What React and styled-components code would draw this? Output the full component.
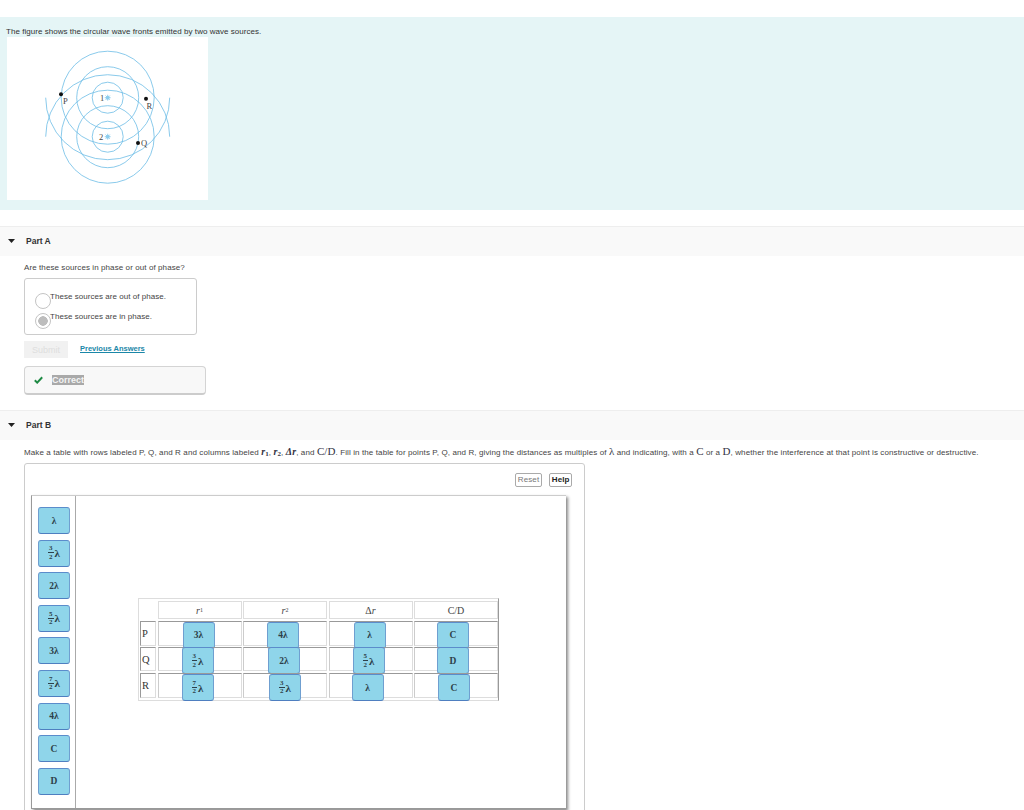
import React from 'react';
import styled, { createGlobalStyle } from 'styled-components';

const GlobalStyle = createGlobalStyle`
  html, body {
    margin: 0;
    height: 810px;
    overflow: hidden;
    background: #fff;
  }
  body {
    font-family: "Liberation Sans", Arial, sans-serif;
    font-size: 8px;
    color: #444;
  }
`;

const Intro = styled.section`
  margin-top: 17px;
  height: 193px;
  box-sizing: border-box;
  padding: 10px 0 0 6px;
  background: #e5f5f6;
`;

const IntroText = styled.div`
  height: 10px;
  line-height: 10px;
  color: #333;
  letter-spacing: 0.04px;
`;

const Figure = styled.div`
  width: 201px;
  height: 163px;
  margin-left: 1px;
  background: #fff;
`;

const PartHeader = styled.header`
  display: flex;
  align-items: center;
  height: 30px;
  box-sizing: border-box;
  margin-top: ${(p) => p.$top}px;
  border-top: 1px solid #eee;
  background: #f9f9f9;
  padding: 0 0 1px 8px;
  font-size: 8.5px;
  font-weight: 700;
  color: #333;
  gap: 11px;
`;

const PartBody = styled.div`
  padding-left: 24px;
`;

const Question = styled.p`
  margin: 7px 0 0;
  height: 10px;
  line-height: 10px;
  letter-spacing: 0.09px;
`;

const Choices = styled.div`
  box-sizing: border-box;
  width: 173px;
  height: 57px;
  margin-top: 5px;
  padding: 10px 0 0 10px;
  border: 1px solid #ccc;
  border-radius: 3px;
`;

const Choice = styled.div`
  display: flex;
  height: 20px;
  letter-spacing: 0.04px;
  line-height: 16px;
`;

const Radio = styled.span`
  flex: none;
  box-sizing: border-box;
  width: 16px;
  height: 16px;
  margin: 4px -1px 0 0;
  border: 1px solid #c4c4c4;
  border-radius: 50%;
  background: ${(p) =>
    p.$checked ? 'radial-gradient(circle, #bdbdbd 0 4.5px, #fff 5px)' : '#fff'};
`;

const Actions = styled.div`
  display: flex;
  align-items: center;
  gap: 12px;
  margin-top: 6px;
`;

const SubmitButton = styled.span`
  display: flex;
  align-items: center;
  justify-content: center;
  width: 44px;
  height: 17px;
  background: #f1f1f1;
  color: #dedede;
  font-size: 9px;
`;

const AnswersLink = styled.a`
  position: relative;
  top: -1px;
  color: #1b87a8;
  font-size: 7.5px;
  font-weight: 700;
  text-decoration: underline;
`;

const Feedback = styled.div`
  display: flex;
  align-items: center;
  gap: 9px;
  box-sizing: border-box;
  width: 182px;
  height: 29px;
  margin-top: 8px;
  padding-left: 9px;
  background: #f8f8f8;
  border: 1px solid #d4d4d4;
  border-bottom: 2px solid #ccc;
  border-radius: 4px;
`;

const CorrectLabel = styled.span`
  background: #a9a9a9;
  color: #f4f4f4;
  font-weight: 700;
  font-size: 9px;
  line-height: 10px;
`;

const Prompt = styled.p`
  margin: 6px 0 0;
  height: 11px;
  line-height: 11px;
  white-space: nowrap;
  letter-spacing: 0.11px;
`;

const MathVar = styled.span`
  font-family: "Liberation Serif", serif;
  font-style: ${(p) => (p.$upright ? 'normal' : 'italic')};
  font-weight: ${(p) => (p.$light ? 400 : 700)};
  font-size: ${(p) => (p.$light ? 11 : 10)}px;
  color: #334;
  sub {
    font-size: 7px;
    vertical-align: -1px;
    line-height: 0;
    font-style: normal;
  }
`;

const Card = styled.div`
  box-sizing: border-box;
  width: 561px;
  height: 360px;
  margin-top: 6px;
  padding: 9px 6px 0 6px;
  border: 1px solid #ccc;
  border-radius: 3px 3px 0 0;
`;

const Tools = styled.div`
  display: flex;
  justify-content: flex-end;
  gap: 7px;
  padding-right: 6px;
`;

const ToolButton = styled.span`
  box-sizing: border-box;
  height: 14px;
  padding: 0 ${(p) => (p.$strong ? 1.5 : 2)}px;
  line-height: 12px;
  border: 1px solid #aaa;
  border-radius: 2px;
  background: #fff;
  color: ${(p) => (p.$strong ? '#222' : '#777')};
  font-weight: ${(p) => (p.$strong ? 700 : 400)};
  letter-spacing: 0.1px;
`;

const Board = styled.div`
  display: flex;
  box-sizing: border-box;
  width: 535px;
  height: 314px;
  margin-top: 8px;
  border-top: 1px solid #ccc;
  border-left: 1px solid #999;
  border-bottom: 1px solid #999;
  box-shadow: 2px 2px 3px #888;
  background: #fff;
`;

const Tray = styled.div`
  flex: none;
  display: flex;
  flex-direction: column;
  gap: 5.6px;
  box-sizing: border-box;
  width: 44px;
  padding: 11px 0 0 6px;
  border-right: 1px solid #aaa;
`;

const Token = styled.span`
  display: flex;
  align-items: center;
  justify-content: center;
  gap: 1px;
  box-sizing: border-box;
  width: 32px;
  height: 27px;
  background: #8fd5ea;
  border: 1px solid #6f9fd0;
  border-top-color: #5b8ccb;
  border-bottom-color: #4f7fc0;
  border-radius: 3px;
  font-family: "Liberation Serif", serif;
  font-weight: 700;
  font-size: 9.5px;
  color: #2d3f49;
`;

const PlacedToken = styled(Token)`
  position: absolute;
  top: ${(p) => p.$top}px;
  left: ${(p) => p.$left}px;
`;

const Fraction = styled.span`
  display: inline-flex;
  flex-direction: column;
  align-items: center;
  font-size: 7px;
  line-height: 7px;
`;

const Numerator = styled.span`
  padding: 0 1px;
  border-bottom: 1px solid #2d3f49;
`;

const Denominator = styled.span`
  padding-top: 0.5px;
`;

const Lambda = styled.span`
  font-size: 11px;
`;

const Workspace = styled.div`
  flex: 1;
  padding: 102px 0 0 62px;
`;

const Table = styled.div`
  position: relative;
  display: grid;
  grid-template-columns: 16px repeat(4, 84px);
  grid-template-rows: 18px 25px 24px 25px;
  gap: 1.7px 1.5px;
  box-sizing: border-box;
  width: 361px;
  height: 103px;
  padding: 2px 0 0 1px;
  border-top: 1px solid #ddd;
  border-left: 1px solid #ddd;
  border-right: 1px solid #999;
  border-bottom: 1px solid #ddd;
`;

const HeadCell = styled.div`
  display: flex;
  align-items: center;
  justify-content: center;
  border: 1px solid #ddd;
  font-family: "Liberation Serif", serif;
  font-size: 10px;
  color: #444;
  font-style: ${(p) => (p.$italic ? 'italic' : 'normal')};
  sub {
    font-size: 6px;
    line-height: 0;
    font-style: normal;
  }
`;

const BlankHead = styled.div``;

const RowLabel = styled.div`
  display: flex;
  align-items: center;
  padding-left: 1px;
  border: 1px solid;
  border-color: #999 #ddd #ddd #999;
  font-family: "Liberation Serif", serif;
  font-size: 10.5px;
  color: #333;
`;

const DropCell = styled.div`
  position: relative;
  border: 1px solid;
  border-color: #999 #ddd #ddd #ccc;
`;

const FracValue = ({ n }) => (
  <>
    <Fraction>
      <Numerator>{n}</Numerator>
      <Denominator>2</Denominator>
    </Fraction>
    <Lambda>λ</Lambda>
  </>
);

const renderValue = (v) =>
  typeof v === 'number' ? <FracValue n={v} /> : v;

const trayValues = ['λ', 3, '2λ', 5, '3λ', 7, '4λ', 'C', 'D'];

// left/top are measured from the cell that holds the token
const rows = [
  {
    label: 'P',
    cells: [
      { v: '3λ', left: 24, top: 0 },
      { v: '4λ', left: 23, top: 0 },
      { v: 'λ', left: 24, top: 0 },
      { v: 'C', left: 22, top: 0 },
    ],
  },
  {
    label: 'Q',
    cells: [
      { v: 3, left: 23, top: -1 },
      { v: '2λ', left: 24, top: -1 },
      { v: 5, left: 23, top: -1 },
      { v: 'D', left: 22, top: -1 },
    ],
  },
  {
    label: 'R',
    cells: [
      { v: 7, left: 23, top: 0 },
      { v: 3, left: 25, top: 0 },
      { v: 'λ', left: 22, top: 0 },
      { v: 'C', left: 23, top: 0 },
    ],
  },
];

const WAVE = '#6cbce6';
const radii = [15.5, 31, 46.5];

const Burst = ({ x, y }) => (
  <g stroke="#8ccdee" strokeWidth="0.8">
    <line x1={x - 3} y1={y} x2={x + 3} y2={y} />
    <line x1={x} y1={y - 3} x2={x} y2={y + 3} />
    <line x1={x - 2.2} y1={y - 2.2} x2={x + 2.2} y2={y + 2.2} />
    <line x1={x - 2.2} y1={y + 2.2} x2={x + 2.2} y2={y - 2.2} />
    <circle cx={x} cy={y} r="1.6" fill="#8ccdee" />
  </g>
);

const WaveFigure = () => (
  <svg width="201" height="163" viewBox="0 0 201 163">
    <g fill="none" stroke={WAVE} strokeWidth="0.8">
      {radii.map((r) => (
        <React.Fragment key={r}>
          <circle cx="100.7" cy="60.7" r={r} />
          <circle cx="100.7" cy="99.7" r={r} />
        </React.Fragment>
      ))}
      <path d="M38.7 60.7 A62 62 0 0 0 162.7 60.7" />
      <path d="M38.7 99.7 A62 62 0 0 1 162.7 99.7" />
    </g>
    <Burst x={100.7} y={60.7} />
    <Burst x={100.7} y={99.7} />
    <g fill="#111">
      <circle cx="54" cy="57.3" r="2" />
      <circle cx="139" cy="61.7" r="2" />
      <circle cx="131" cy="106" r="2" />
    </g>
    <g fontFamily="Liberation Serif, serif" fontSize="8.5" fill="#444">
      <text x="56" y="66.5">P</text>
      <text x="139.5" y="71.5">R</text>
      <text x="134" y="109">Q</text>
      <text x="93" y="63.5">1</text>
      <text x="92" y="102.5">2</text>
    </g>
  </svg>
);

const Caret = () => (
  <svg width="7" height="4" viewBox="0 0 7 4">
    <path d="M0 0H7L3.5 4Z" fill="#222" />
  </svg>
);

const Check = () => (
  <svg width="9" height="8" viewBox="0 0 9 8">
    <path d="M0.8 4.2L3.2 6.6L8.2 1.2" fill="none" stroke="#1e8a44" strokeWidth="2" />
  </svg>
);

const App = () => (
  <>
    <GlobalStyle />
    <Intro>
      <IntroText>The figure shows the circular wave fronts emitted by two wave sources.</IntroText>
      <Figure>
        <WaveFigure />
      </Figure>
    </Intro>

    <PartHeader $top={16}>
      <Caret />
      Part A
    </PartHeader>
    <PartBody>
      <Question>Are these sources in phase or out of phase?</Question>
      <Choices>
        <Choice>
          <Radio />
          These sources are out of phase.
        </Choice>
        <Choice>
          <Radio $checked />
          These sources are in phase.
        </Choice>
      </Choices>
      <Actions>
        <SubmitButton>Submit</SubmitButton>
        <AnswersLink>Previous Answers</AnswersLink>
      </Actions>
      <Feedback>
        <Check />
        <CorrectLabel>Correct</CorrectLabel>
      </Feedback>
    </PartBody>

    <PartHeader $top={15}>
      <Caret />
      Part B
    </PartHeader>
    <PartBody>
      <Prompt>
        Make a table with rows labeled P, Q, and R and columns labeled{' '}
        <MathVar>r<sub>1</sub></MathVar>, <MathVar>r<sub>2</sub></MathVar>,{' '}
        <MathVar>Δr</MathVar>, and <MathVar $upright $light>C/D</MathVar>. Fill in the table for
        points P, Q, and R, giving the distances as multiples of <MathVar $upright $light>λ</MathVar> and
        indicating, with a <MathVar $upright $light>C</MathVar> or a <MathVar $upright $light>D</MathVar>,
        whether the interference at that point is constructive or destructive.
      </Prompt>
      <Card>
        <Tools>
          <ToolButton>Reset</ToolButton>
          <ToolButton $strong>Help</ToolButton>
        </Tools>
        <Board>
          <Tray>
            {trayValues.map((v) => (
              <Token key={v}>{renderValue(v)}</Token>
            ))}
          </Tray>
          <Workspace>
            <Table>
              <BlankHead />
              <HeadCell $italic>r<sub>1</sub></HeadCell>
              <HeadCell $italic>r<sub>2</sub></HeadCell>
              <HeadCell>Δ<i>r</i></HeadCell>
              <HeadCell>C/D</HeadCell>
              {rows.map((row) => (
                <React.Fragment key={row.label}>
                  <RowLabel>{row.label}</RowLabel>
                  {row.cells.map((c, i) => (
                    <DropCell key={i}>
                      <PlacedToken $left={c.left} $top={c.top}>
                        {renderValue(c.v)}
                      </PlacedToken>
                    </DropCell>
                  ))}
                </React.Fragment>
              ))}
            </Table>
          </Workspace>
        </Board>
      </Card>
    </PartBody>
  </>
);

export default App;
